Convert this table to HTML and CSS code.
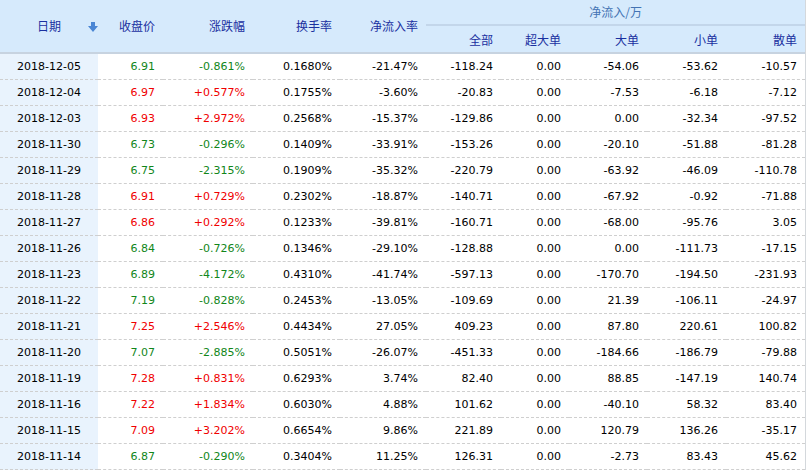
FILE: index.html
```html
<!DOCTYPE html>
<html lang="zh">
<head>
<meta charset="utf-8">
<title>资金流向</title>
<link rel="stylesheet" href="styles.css">
</head>
<body>
<table class="flow">
  <colgroup>
    <col class="c-date"><col class="c-close"><col class="c-chg"><col class="c-turn"><col class="c-rate">
    <col class="c-all"><col class="c-xl"><col class="c-l"><col class="c-s"><col class="c-r">
  </colgroup>
  <thead>
    <tr>
      <th rowspan="2" class="h-date">日期<svg class="sort" width="10" height="10" viewBox="0 0 10 10"><path d="M3 0h4v4h3L5 10 0 4h3z" fill="#4a86d4"/></svg></th>
      <th rowspan="2">收盘价</th>
      <th rowspan="2">涨跌幅</th>
      <th rowspan="2">换手率</th>
      <th rowspan="2">净流入率</th>
      <th colspan="5" class="group">净流入/万</th>
    </tr>
    <tr class="sub">
      <th>全部</th><th>超大单</th><th>大单</th><th>小单</th><th>散单</th>
    </tr>
  </thead>
  <tbody>
    <tr><td class="d">2018-12-05</td><td class="dn">6.91</td><td class="dn">-0.861%</td><td>0.1680%</td><td>-21.47%</td><td>-118.24</td><td>0.00</td><td>-54.06</td><td>-53.62</td><td>-10.57</td></tr>
    <tr><td class="d">2018-12-04</td><td class="up">6.97</td><td class="up">+0.577%</td><td>0.1755%</td><td>-3.60%</td><td>-20.83</td><td>0.00</td><td>-7.53</td><td>-6.18</td><td>-7.12</td></tr>
    <tr><td class="d">2018-12-03</td><td class="up">6.93</td><td class="up">+2.972%</td><td>0.2568%</td><td>-15.37%</td><td>-129.86</td><td>0.00</td><td>0.00</td><td>-32.34</td><td>-97.52</td></tr>
    <tr><td class="d">2018-11-30</td><td class="dn">6.73</td><td class="dn">-0.296%</td><td>0.1409%</td><td>-33.91%</td><td>-153.26</td><td>0.00</td><td>-20.10</td><td>-51.88</td><td>-81.28</td></tr>
    <tr><td class="d">2018-11-29</td><td class="dn">6.75</td><td class="dn">-2.315%</td><td>0.1909%</td><td>-35.32%</td><td>-220.79</td><td>0.00</td><td>-63.92</td><td>-46.09</td><td>-110.78</td></tr>
    <tr><td class="d">2018-11-28</td><td class="up">6.91</td><td class="up">+0.729%</td><td>0.2302%</td><td>-18.87%</td><td>-140.71</td><td>0.00</td><td>-67.92</td><td>-0.92</td><td>-71.88</td></tr>
    <tr><td class="d">2018-11-27</td><td class="up">6.86</td><td class="up">+0.292%</td><td>0.1233%</td><td>-39.81%</td><td>-160.71</td><td>0.00</td><td>-68.00</td><td>-95.76</td><td>3.05</td></tr>
    <tr><td class="d">2018-11-26</td><td class="dn">6.84</td><td class="dn">-0.726%</td><td>0.1346%</td><td>-29.10%</td><td>-128.88</td><td>0.00</td><td>0.00</td><td>-111.73</td><td>-17.15</td></tr>
    <tr><td class="d">2018-11-23</td><td class="dn">6.89</td><td class="dn">-4.172%</td><td>0.4310%</td><td>-41.74%</td><td>-597.13</td><td>0.00</td><td>-170.70</td><td>-194.50</td><td>-231.93</td></tr>
    <tr><td class="d">2018-11-22</td><td class="dn">7.19</td><td class="dn">-0.828%</td><td>0.2453%</td><td>-13.05%</td><td>-109.69</td><td>0.00</td><td>21.39</td><td>-106.11</td><td>-24.97</td></tr>
    <tr><td class="d">2018-11-21</td><td class="up">7.25</td><td class="up">+2.546%</td><td>0.4434%</td><td>27.05%</td><td>409.23</td><td>0.00</td><td>87.80</td><td>220.61</td><td>100.82</td></tr>
    <tr><td class="d">2018-11-20</td><td class="dn">7.07</td><td class="dn">-2.885%</td><td>0.5051%</td><td>-26.07%</td><td>-451.33</td><td>0.00</td><td>-184.66</td><td>-186.79</td><td>-79.88</td></tr>
    <tr><td class="d">2018-11-19</td><td class="up">7.28</td><td class="up">+0.831%</td><td>0.6293%</td><td>3.74%</td><td>82.40</td><td>0.00</td><td>88.85</td><td>-147.19</td><td>140.74</td></tr>
    <tr><td class="d">2018-11-16</td><td class="up">7.22</td><td class="up">+1.834%</td><td>0.6030%</td><td>4.88%</td><td>101.62</td><td>0.00</td><td>-40.10</td><td>58.32</td><td>83.40</td></tr>
    <tr><td class="d">2018-11-15</td><td class="up">7.09</td><td class="up">+3.202%</td><td>0.6654%</td><td>9.86%</td><td>221.89</td><td>0.00</td><td>120.79</td><td>136.26</td><td>-35.17</td></tr>
    <tr><td class="d">2018-11-14</td><td class="dn">6.87</td><td class="dn">-0.290%</td><td>0.3404%</td><td>11.25%</td><td>126.31</td><td>0.00</td><td>-2.73</td><td>83.43</td><td>45.62</td></tr>
  </tbody>
</table>
</body>
</html>
```
FILE: styles.css
```css
html, body {
  margin: 0;
  padding: 0;
  background: #fff;
}

.flow {
  border-collapse: separate;
  border-spacing: 0;
  table-layout: fixed;
  width: 806px;
  border-right: 1px solid #d4d8dc;
  font-family: "DejaVu Sans", Tahoma, sans-serif;
  font-size: 11px;
  color: #000;
}

.c-date { width: 98px; }
.c-close { width: 65px; }
.c-chg { width: 90px; }
.c-turn { width: 87px; }
.c-rate { width: 86px; }
.c-all { width: 75px; }
.c-xl { width: 68px; }
.c-l { width: 78px; }
.c-s { width: 79px; }
.c-r { width: 79px; }

.flow th {
  background: #d6eafc;
  font-family: "Noto Sans CJK SC", "Microsoft YaHei", sans-serif;
  font-size: 12px;
  font-weight: normal;
  color: #1a30a0;
  text-align: right;
  padding: 0 8px 0 0;
  vertical-align: middle;
  line-height: 16px;
}

.flow thead tr:first-child th[rowspan] {
  border-bottom: 2px solid #c7d3e0;
  height: 52px;
}

.flow th.h-date {
  position: relative;
  text-align: center;
  padding: 0;
}

.sort {
  position: absolute;
  left: 88px;
  top: 22px;
}

.flow th.group {
  text-align: center;
  color: #4373b3;
  height: 24px;
  border-bottom: 2px solid #c3d6ea;
  padding: 0;
}

.flow .sub th {
  height: 25px;
  border-bottom: 2px solid #c7d3e0;
  padding-top: 1px;
}

.flow td {
  height: 25px;
  padding: 0 8px 0 0;
  text-align: right;
  border-bottom: 1px dashed #cfcfcf;
  white-space: nowrap;
}

.flow td.d {
  background: #e9f3fd;
  text-align: center;
  padding: 0;
}

.flow td.up { color: #f00000; }
.flow td.dn { color: #11861a; }
```
